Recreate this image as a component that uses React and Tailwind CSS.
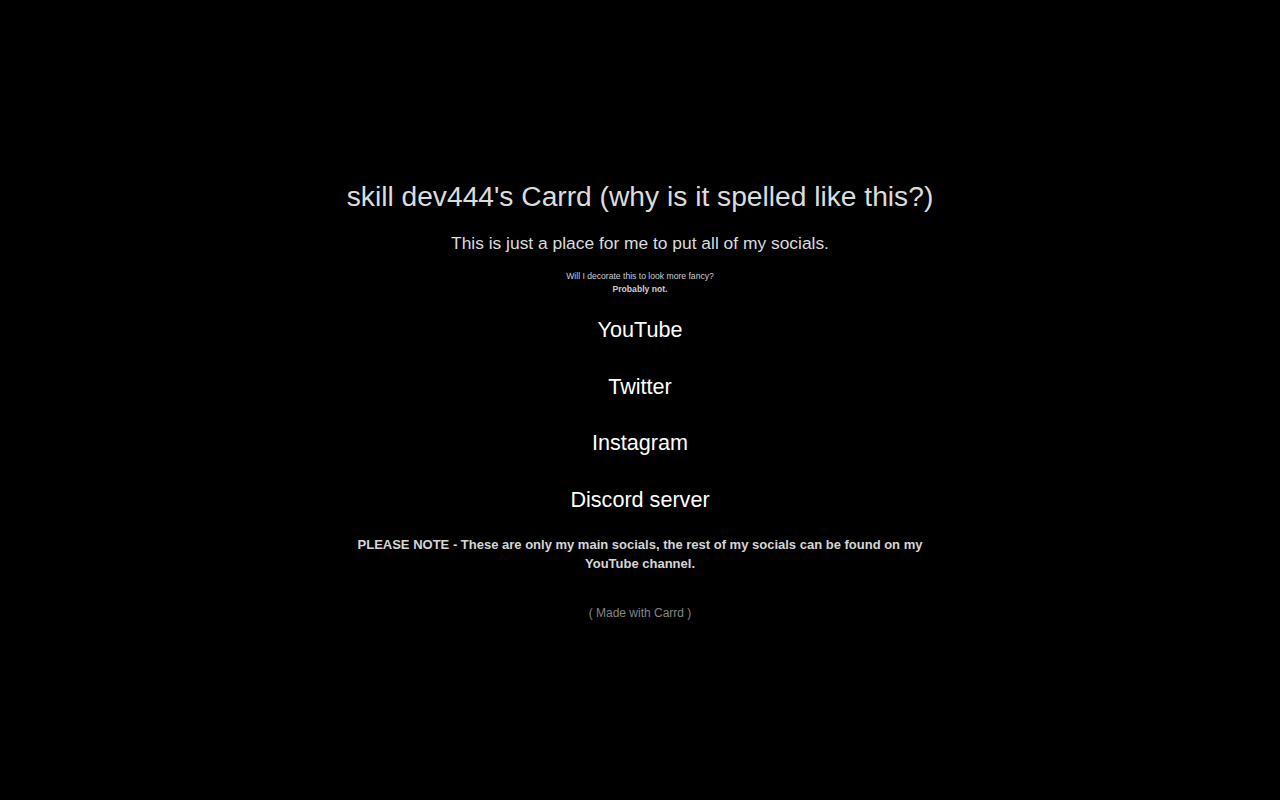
import React from "react";

const links = ["YouTube", "Twitter", "Instagram", "Discord server"];

export default function App() {
    return (
        <div
            className="min-h-screen bg-black flex flex-col items-center pt-[179px] text-center"
            style={{ fontFamily: '"Liberation Sans", Arial, sans-serif' }}
        >
            <h1 className="text-[28.2px] leading-[34px] text-[#dcdcdc]">
                skill dev444's Carrd (why is it spelled like this?)
            </h1>
            <p className="mt-[20px] text-[17.4px] leading-[20px] text-[#dcdcdc]">
                This is just a place for me to put all of my socials.
            </p>
            <div className="mt-[17px] text-[8.6px] leading-[13px] text-[#cfcfcf]">
                <p>Will I decorate this to look more fancy?</p>
                <p className="font-bold">Probably not.</p>
            </div>
            <div className="mt-[21px] flex flex-col items-center gap-[31.5px]">
                {links.map((l) => (
                    <a key={l} href="#" className="text-[21.6px] leading-[25px] text-white">
                        {l}
                    </a>
                ))}
            </div>
            <p className="mt-[23px] w-[580px] text-[13px] leading-[19px] font-bold text-[#d6d6d6]">
                PLEASE NOTE - These are only my main socials, the rest of my socials can be found on my YouTube channel.
            </p>
            <p className="mt-[33px] text-[12px] leading-[14px] text-[#858585]">( Made with Carrd )</p>
        </div>
    );
}
